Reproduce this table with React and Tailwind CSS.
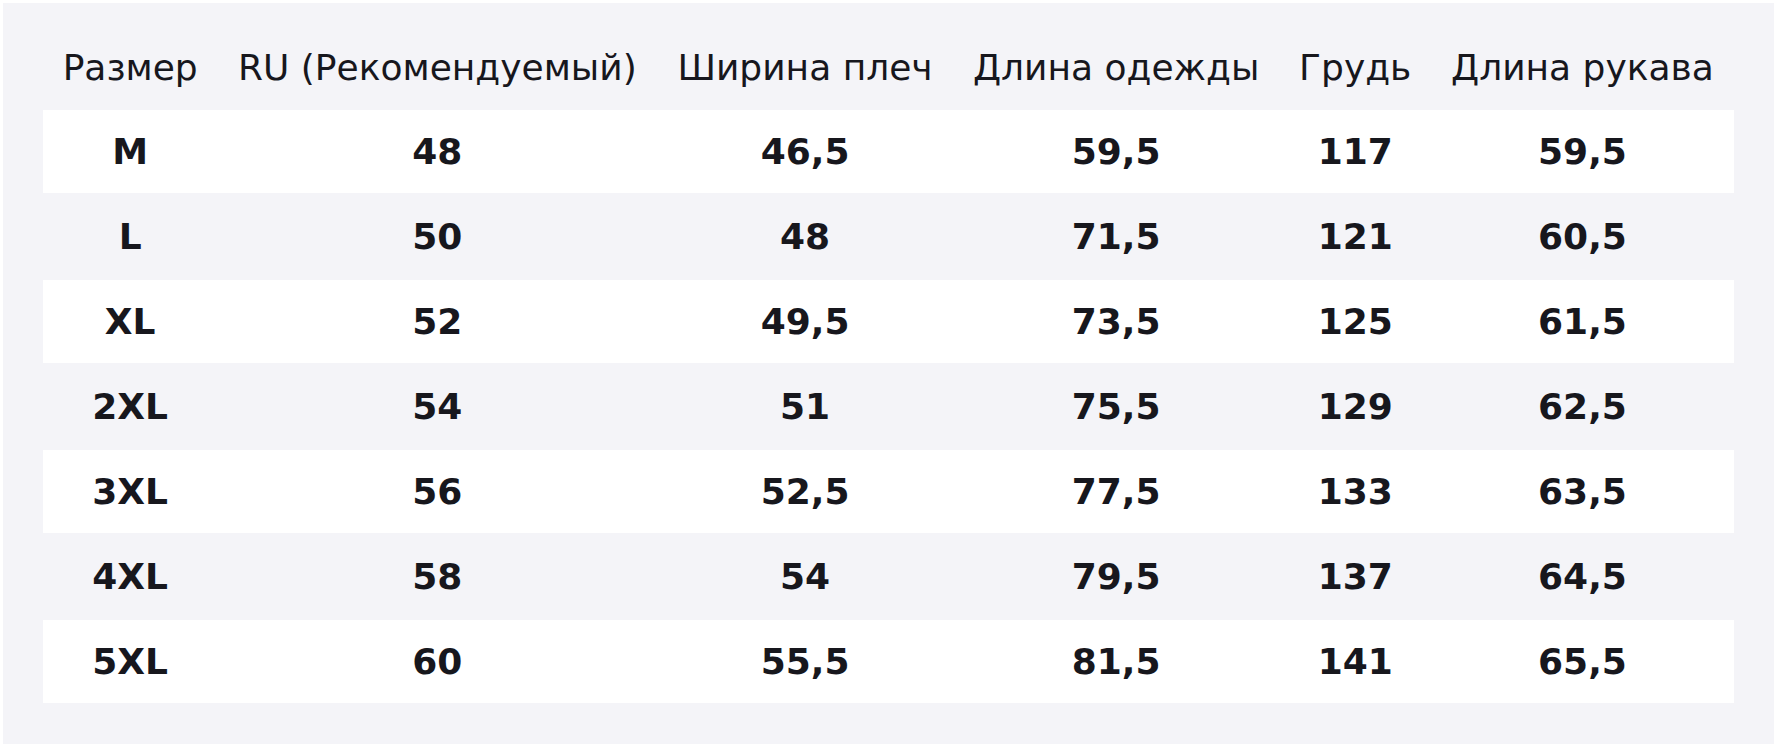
import React from "react";

const HEAD = ["Размер", "RU (Рекомендуемый)", "Ширина плеч", "Длина одежды", "Грудь", "Длина рукава"];

const ROWS = [
  ["M", "48", "46,5", "59,5", "117", "59,5"],
  ["L", "50", "48", "71,5", "121", "60,5"],
  ["XL", "52", "49,5", "73,5", "125", "61,5"],
  ["2XL", "54", "51", "75,5", "129", "62,5"],
  ["3XL", "56", "52,5", "77,5", "133", "63,5"],
  ["4XL", "58", "54", "79,5", "137", "64,5"],
  ["5XL", "60", "55,5", "81,5", "141", "65,5"],
];

export default function App() {
  return (
    <div className="min-h-screen bg-white p-[3px] font-['DejaVu_Sans',sans-serif] text-[#17171d]">
      <div className="bg-[#f4f4f8] px-[40px] pt-[40px] pb-[41px]">
        <table className="w-full border-collapse text-center">
          <thead>
            <tr>
              {HEAD.map((h) => (
                <th key={h} className="px-[19px] pt-[4px] pb-[21px] text-[36px] font-normal leading-[42px] whitespace-nowrap">
                  {h}
                </th>
              ))}
            </tr>
          </thead>
          <tbody>
            {ROWS.map((r, i) => (
              <tr key={r[0]} className={i % 2 === 0 ? "h-[83px] bg-white" : "h-[87px]"}>
                {r.map((c, j) => (
                  <td key={j} className="px-[19px] py-0 text-[36px] font-bold leading-[42px]">
                    {c}
                  </td>
                ))}
              </tr>
            ))}
          </tbody>
        </table>
      </div>
    </div>
  );
}
